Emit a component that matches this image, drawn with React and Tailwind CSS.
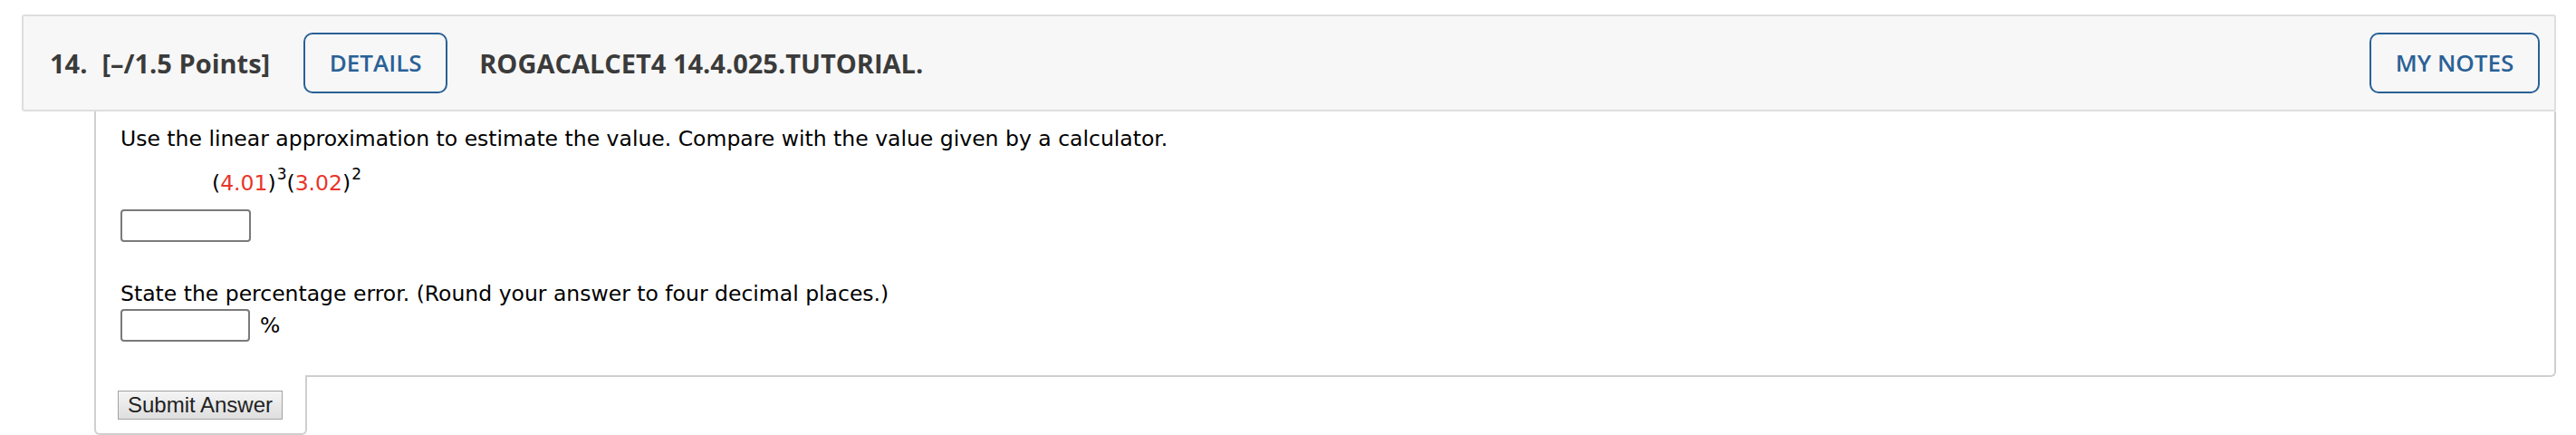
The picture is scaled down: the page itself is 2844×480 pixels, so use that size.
import React from 'react';

const Sup = ({ children }) => (
  <span className="relative -top-[12px] pl-px text-[17px] leading-none">{children}</span>
);

const App = () => {
  return (
    <div className="min-h-[480px] w-[2844px] bg-white">
      {/* Question header */}
      <div
        className="ml-[24px] mr-[22px] mt-[16px] flex h-[107px] items-center rounded-[3px] border-2 border-[#dedede] bg-[#f7f7f7] pl-[29px] pr-[16px] text-[#3b3b3b]"
        style={{ fontFamily: '"Open Sans", "Noto Sans", sans-serif' }}
      >
        <span className="text-[29px] font-bold">14.</span>
        <span className="ml-[16px] text-[29px] font-bold">[–/1.5 Points]</span>
        <button className="ml-[37px] flex h-[67px] w-[159px] items-center justify-center rounded-[10px] border-2 border-[#2a6196] text-[26px] font-semibold text-[#2a6196]">
          DETAILS
        </button>
        <span className="ml-[35px] text-[29px] font-bold">ROGACALCET4 14.4.025.TUTORIAL.</span>
        <button className="ml-auto flex h-[67px] w-[188px] items-center justify-center rounded-[10px] border-2 border-[#2a6196] text-[26px] font-semibold text-[#2a6196]">
          MY NOTES
        </button>
      </div>

      {/* Question body */}
      <div
        className="ml-[104px] mr-[22px] rounded-br-[6px] border-x-2 border-b-2 border-[#cfcfcf] pb-[37px] pl-[27px] pt-[16px] text-[23.5px] leading-[28px] text-black"
        style={{ fontFamily: '"DejaVu Sans", Verdana, sans-serif' }}
      >
        <p>Use the linear approximation to estimate the value. Compare with the value given by a calculator.</p>
        <div className="mt-[21px] h-[28px] pl-[101px]">
          (<span className="text-[#e8352b]">4.01</span>)<Sup>3</Sup>(<span className="text-[#e8352b]">3.02</span>)<Sup>2</Sup>
        </div>
        <input className="mt-[15px] block h-[36px] w-[144px] rounded-[4px] border-2 border-[#7a7a7a] bg-white" />
        <p className="mt-[43px]">State the percentage error. (Round your answer to four decimal places.)</p>
        <div className="mt-[3px] flex items-center">
          <input className="h-[36px] w-[143px] rounded-[4px] border-2 border-[#7a7a7a] bg-white" />
          <span className="ml-[11px]">%</span>
        </div>
      </div>

      {/* Submit tab */}
      <div className="relative ml-[104px] -mt-[2px] w-[235px] rounded-b-[6px] border-x-2 border-b-2 border-[#cfcfcf] bg-white pb-[15px] pl-[24px] pt-[17px]">
        <button
          className="h-[32px] w-[182px] border border-[#a3a3a3] bg-gradient-to-b from-[#f4f4f4] to-[#dedede] text-[24px] leading-[30px] text-[#222]"
          style={{ fontFamily: '"Liberation Sans", Arial, sans-serif' }}
        >
          Submit Answer
        </button>
      </div>
    </div>
  );
};

export default App;
